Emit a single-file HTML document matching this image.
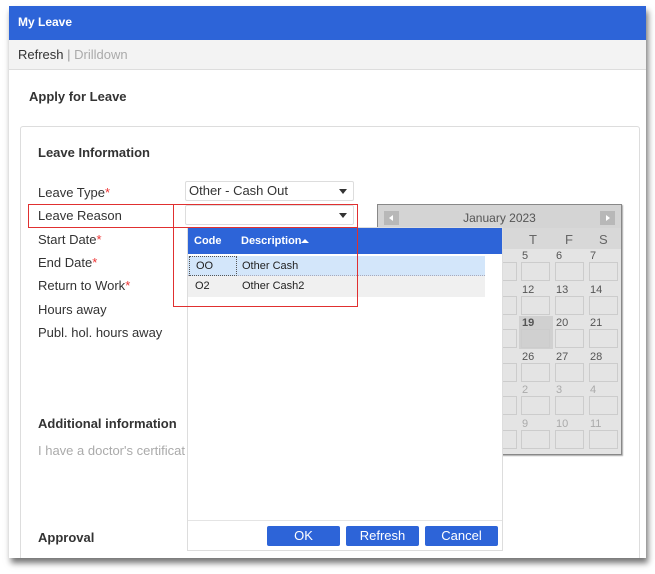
<!DOCTYPE html>
<html><head><style>
*{box-sizing:border-box;margin:0;padding:0}
body{width:655px;height:574px;background:#fff;font-family:"Liberation Sans",Arial,sans-serif;position:relative;overflow:hidden}
.a{position:absolute}
.win{left:9px;top:6px;width:637px;height:552px;background:#fff;box-shadow:2px 5px 6px rgba(0,0,0,.55);overflow:hidden}
.lbl{left:38px;font-size:13px;color:#333}
.st{color:#e33}
.cell{position:absolute;width:34px;height:33px;font-size:11px;color:#555}
.cell span{position:absolute;left:3px;top:1px}
.cell i{position:absolute;left:2px;top:13px;width:29px;height:19px;border:1px solid #ccc}
.btn{top:526px;height:20px;width:73px;background:#2d64d8;color:#fff;font-size:13px;text-align:center;line-height:20px;border-radius:2px}
</style></head><body>
<div class="a win">
 <div class="a" style="left:0;top:0;width:637px;height:34px;background:#2d64d8;color:#fff;font-weight:bold;font-size:12px;line-height:33px;padding-left:9px">My Leave</div>
 <div class="a" style="left:0;top:34px;width:637px;height:30px;background:#f3f3f3;border-bottom:1px solid #ddd;font-size:13px;line-height:30px;padding-left:9px;color:#333">Refresh <span style="color:#999">|</span> <span style="color:#aaa">Drilldown</span></div>
 <div class="a" style="left:20px;top:83px;font-size:13px;font-weight:bold;color:#333">Apply for Leave</div>
 <div class="a" style="left:11px;top:120px;width:620px;height:460px;border:1px solid #ddd;border-radius:3px"></div>
</div>
<div class="a" style="left:38px;top:145px;font-size:13px;font-weight:bold;color:#333">Leave Information</div>
<div class="a lbl" style="top:185px">Leave Type<span class="st">*</span></div>
<div class="a lbl" style="top:208px">Leave Reason</div>
<div class="a lbl" style="top:232px">Start Date<span class="st">*</span></div>
<div class="a lbl" style="top:255px">End Date<span class="st">*</span></div>
<div class="a lbl" style="top:278px">Return to Work<span class="st">*</span></div>
<div class="a lbl" style="top:302px">Hours away</div>
<div class="a lbl" style="top:325px">Publ. hol. hours away</div>
<div class="a" style="left:38px;top:416px;font-size:13px;font-weight:bold;color:#333">Additional information</div>
<div class="a" style="left:38px;top:443px;font-size:13px;color:#aaa">I have a doctor's certificat</div>
<div class="a" style="left:38px;top:530px;font-size:13px;font-weight:bold;color:#333">Approval</div>
<div class="a" style="left:185px;top:181px;width:169px;height:20px;border:1px solid #ddd;border-radius:2px;font-size:13px;line-height:18px;padding-left:3px;color:#333">Other - Cash Out<span class="a" style="right:6px;top:7px;border:4px solid transparent;border-top:5px solid #333;border-bottom:0"></span></div>
<div class="a" style="left:185px;top:205px;width:169px;height:20px;border:1px solid #ddd;border-radius:2px"><span class="a" style="right:6px;top:7px;border:4px solid transparent;border-top:5px solid #333;border-bottom:0"></span></div>
<!-- calendar -->
<div class="a" style="left:377px;top:204px;width:245px;height:251px;border:1px solid #888;background:#e4e4e4;box-shadow:1px 1px 1px #aaa">
 <div class="a" style="left:0;top:0;width:243px;height:23px;background:#d4d4d4"></div>
 <div class="a" style="left:6px;top:6px;width:15px;height:14px;background:#b8b8b8"></div>
 <div class="a" style="left:222px;top:6px;width:15px;height:14px;background:#b8b8b8"></div>
 <div class="a" style="left:11px;top:10px;border:3px solid transparent;border-right:4px solid #fff;border-left:0"></div>
 <div class="a" style="left:228px;top:10px;border:3px solid transparent;border-left:4px solid #fff;border-right:0"></div>
 <div class="a" style="left:0;top:6px;width:243px;text-align:center;font-size:12px;color:#555">January 2023</div>
 <div class="a" style="left:0;top:23px;width:243px;height:21px;background:#d8d8d8;font-size:13px;color:#666"><span class="a" style="left:151px;top:4px">T</span><span class="a" style="left:187px;top:4px">F</span><span class="a" style="left:221px;top:4px">S</span></div>
</div>
<div id="cal"></div>
<!-- dropdown -->
<div class="a" style="left:187px;top:227px;width:316px;height:324px;background:#fff;border:1px solid #ddd">
 <div class="a" style="left:0;top:0;width:314px;height:26px;background:#2d64d8;color:#fff;font-size:11px;font-weight:bold;line-height:26px"><span class="a" style="left:6px">Code</span><span class="a" style="left:53px">Description</span><span class="a" style="left:113px;top:11px;border:4px solid transparent;border-bottom:4px solid #fff;border-top:0"></span></div>
 <div class="a" style="left:0;top:28px;width:297px;height:20px;background:#d3e6fa;border-bottom:1px dotted #aab;font-size:11px;line-height:20px;color:#222"><span class="a" style="left:1px;top:0;width:48px;height:20px;border:1px dotted #555;padding-left:6px;line-height:18px">OO</span><span class="a" style="left:54px">Other Cash</span></div>
 <div class="a" style="left:0;top:48px;width:297px;height:21px;background:#f0f0f0;font-size:11px;line-height:21px;color:#222"><span class="a" style="left:7px">O2</span><span class="a" style="left:54px">Other Cash2</span></div>
 <div class="a" style="left:0;top:292px;width:314px;height:1px;background:#e4e4e4"></div>
</div>
<div class="a btn" style="left:267px">OK</div>
<div class="a btn" style="left:346px">Refresh</div>
<div class="a btn" style="left:425px">Cancel</div>
<!-- red boxes -->
<div class="a" style="left:28px;top:204px;width:330px;height:24px;border:1px solid #e03030"></div>
<div class="a" style="left:173px;top:204px;width:185px;height:103px;border:1px solid #e03030"></div>
<script>
var d=[["5","6","7"],["12","13","14"],["19","20","21"],["26","27","28"],["2","3","4"],["9","10","11"]];
var h="";
for(var r=0;r<6;r++){for(var c=0;c<4;c++){var x=485+c*34,y=249+r*33.5;
var t=c==0?"":d[r][c-1];var col=r>=4?"#aaa":"#555";var bg=(r==2&&c==1)?"background:#d0d0d0;":"";
if(c==0){h+='<div class="cell" style="left:'+x+'px;top:'+y+'px;width:17px;overflow:hidden;left:502px"><i style="left:-14px"></i></div>';continue;}
h+='<div class="cell" style="left:'+x+'px;top:'+y+'px;'+bg+'"><span style="color:'+col+';'+(r==2&&c==1?'font-weight:bold':'')+'">'+t+'</span><i></i></div>';}}
document.getElementById("cal").innerHTML=h;
</script>
</body></html>
